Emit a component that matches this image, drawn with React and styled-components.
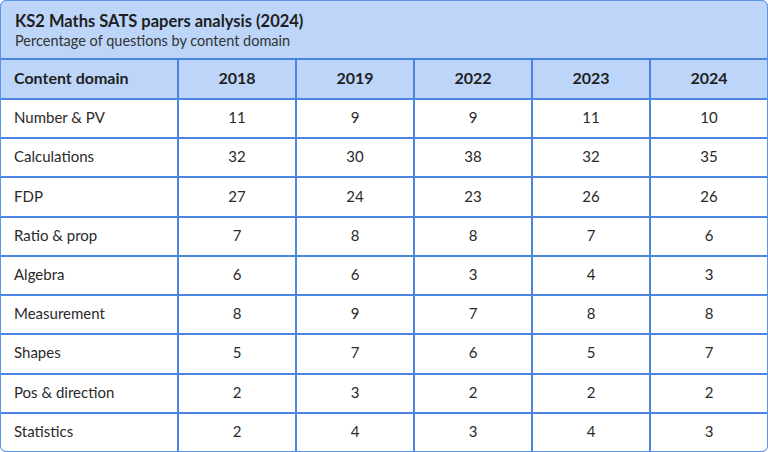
import React from "react";
import styled, { createGlobalStyle } from "styled-components";

const years = ["2018", "2019", "2022", "2023", "2024"];

const rows = [
  ["Number & PV", 11, 9, 9, 11, 10],
  ["Calculations", 32, 30, 38, 32, 35],
  ["FDP", 27, 24, 23, 26, 26],
  ["Ratio & prop", 7, 8, 8, 7, 6],
  ["Algebra", 6, 6, 3, 4, 3],
  ["Measurement", 8, 9, 7, 8, 8],
  ["Shapes", 5, 7, 6, 5, 7],
  ["Pos & direction", 2, 3, 2, 2, 2],
  ["Statistics", 2, 4, 3, 4, 3],
];

function App() {
  return (
    <>
      <GlobalStyle />
      <Card>
        {/* Title */}
        <TitleBlock>
          <Title>KS2 Maths SATS papers analysis (2024)</Title>
          <Subtitle>Percentage of questions by content domain</Subtitle>
        </TitleBlock>
        {/* Table */}
        <Grid>
          <Cell head left>
            Content domain
          </Cell>
          {years.map((y) => (
            <Cell head key={y}>
              {y}
            </Cell>
          ))}
          {rows.map((r) => (
            <React.Fragment key={r[0]}>
              <Cell left>{r[0]}</Cell>
              {r.slice(1).map((v, i) => (
                <Cell key={i}>{v}</Cell>
              ))}
            </React.Fragment>
          ))}
        </Grid>
      </Card>
    </>
  );
}

export default App;

const GlobalStyle = createGlobalStyle`
  body {
    margin: 0;
    background: #ffffff;
    font-family: "Lato", "Open Sans", sans-serif;
    color: #222222;
  }
`;

const Card = styled.div`
  width: 768px;
  height: 452px;
  box-sizing: border-box;
  border: 1px solid #5b93e6;
  border-radius: 6px;
  overflow: hidden;
  display: flex;
  flex-direction: column;
  background: #4a86e0;
`;

const TitleBlock = styled.div`
  height: 57px;
  box-sizing: border-box;
  padding: 10px 14px 0;
  background: #bcd5f8;
  margin-bottom: 2px;
`;

const Title = styled.div`
  font-size: 16.5px;
  font-weight: 700;
  color: #1f1f1f;
  line-height: 20px;
`;

const Subtitle = styled.div`
  font-size: 14.5px;
  color: #333333;
  line-height: 20px;
`;

const Grid = styled.div`
  flex: 1;
  display: grid;
  grid-template-columns: 176px repeat(5, 1fr);
  grid-template-rows: 38px repeat(9, 1fr);
  gap: 2px;
`;

const Cell = styled.div`
  display: flex;
  align-items: center;
  justify-content: ${(p) => (p.left ? "flex-start" : "center")};
  padding: 0 ${(p) => (p.left ? "13px" : "0")} 3px;
  background: ${(p) => (p.head ? "#bcd5f8" : "#ffffff")};
  font-size: ${(p) => (p.head ? "16px" : "15px")};
  font-weight: ${(p) => (p.head ? 700 : 400)};
  color: ${(p) => (p.head ? "#1f1f1f" : "#2a2a2a")};
`;
